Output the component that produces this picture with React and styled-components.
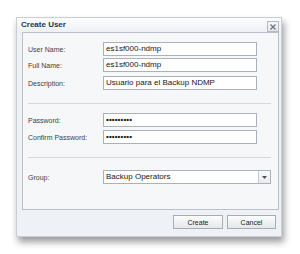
import React from 'react';
import styled, { createGlobalStyle } from 'styled-components';

const GlobalStyle = createGlobalStyle`
  html, body {
    margin: 0;
    padding: 0;
    background: #ffffff;
    font-family: "Liberation Sans", Arial, sans-serif;
  }
`;

const Page = styled.div`
  width: 300px;
  height: 254px;
  padding: 17px 0 0 16px;
  box-sizing: border-box;
`;

const Dialog = styled.div`
  width: 266px;
  height: 220px;
  box-sizing: border-box;
  border: 1px solid #c9ced5;
  background: #eef1f5;
  box-shadow: 2px 5px 7px rgba(0, 0, 0, 0.4);
  display: flex;
  flex-direction: column;
`;

const TitleBar = styled.div`
  height: 14px;
  display: flex;
  justify-content: space-between;
  align-items: flex-start;
  padding: 0 2px 0 4px;
  background: linear-gradient(#fbfcfd, #eef1f5);
`;

const Title = styled.div`
  font-size: 8px;
  font-weight: bold;
  color: #24364d;
  line-height: 14px;
`;

const CloseButton = styled.div`
  width: 12px;
  height: 11px;
  margin-top: 3px;
  box-sizing: border-box;
  border: 1px solid #b3b9c2;
  background: linear-gradient(#f7f8fa, #e3e6ea);
  display: flex;
  align-items: center;
  justify-content: center;
`;

const Panel = styled.div`
  height: 178px;
  margin: 0 2px 0 5px;
  box-sizing: border-box;
  border: 1px solid #b9c0ca;
  background: #f6f7f9;
  padding: 9px 7px 0 5px;
`;

const Row = styled.div`
  display: flex;
  align-items: center;
  height: 14px;
  margin-top: ${(p) => p.$gap || 0}px;
`;

const Label = styled.div`
  width: 75px;
  font-size: 7px;
  color: #3a3f46;
`;

const Field = styled.div`
  width: ${(p) => p.$width || 154}px;
  height: 14px;
  box-sizing: border-box;
  border: 1px solid #a9b1bc;
  background: #ffffff;
  padding-left: 2px;
  font-size: 8px;
  font-weight: ${(p) => (p.$secret ? 'bold' : 'normal')};
  letter-spacing: ${(p) => (p.$secret ? '0.1px' : '0')};
  color: #151515;
  line-height: 12px;
  white-space: nowrap;
  overflow: hidden;
`;

const Select = styled.div`
  width: 168px;
  height: 14px;
  box-sizing: border-box;
  border: 1px solid #a9b1bc;
  background: #ffffff;
  display: flex;
`;

const SelectText = styled.div`
  flex: 1;
  padding-left: 2px;
  font-size: 8px;
  line-height: 12px;
  color: #151515;
`;

const SelectArrow = styled.div`
  width: 11px;
  border-left: 1px solid #c3c9d1;
  background: linear-gradient(#fafbfc, #e9ecef);
  display: flex;
  align-items: center;
  justify-content: center;
`;

const Divider = styled.div`
  height: 1px;
  background: #d3d8de;
  margin: ${(p) => p.$top}px 0 ${(p) => p.$bottom}px;
`;

const Footer = styled.div`
  display: flex;
  justify-content: flex-end;
  gap: 4px;
  padding: 5px 5px 0 0;
`;

const Button = styled.div`
  width: ${(p) => p.$width}px;
  height: 14px;
  box-sizing: border-box;
  border: 1px solid #a7adb5;
  background: linear-gradient(#fdfdfd, #e4e7ea);
  font-size: 7px;
  color: #222;
  display: flex;
  align-items: center;
  justify-content: center;
`;

export default function App() {
  return (
    <>
      <GlobalStyle />
      <Page>
        <Dialog>
          <TitleBar>
            <Title>Create User</Title>
            <CloseButton>
              <svg width="6" height="6" viewBox="0 0 6 6">
                <path d="M0.5 0.5 L5.5 5.5 M5.5 0.5 L0.5 5.5" stroke="#6b727c" strokeWidth="1.2" />
              </svg>
            </CloseButton>
          </TitleBar>
          <Panel>
            <Row>
              <Label>User Name:</Label>
              <Field>es1sf000-ndmp</Field>
            </Row>
            <Row $gap={2}>
              <Label>Full Name:</Label>
              <Field>es1sf000-ndmp</Field>
            </Row>
            <Row $gap={4}>
              <Label>Description:</Label>
              <Field>Usuario para el Backup NDMP</Field>
            </Row>
            <Divider $top={13} $bottom={9} />
            <Row>
              <Label>Password:</Label>
              <Field $secret>•••••••••</Field>
            </Row>
            <Row $gap={3}>
              <Label>Confirm Password:</Label>
              <Field $secret>•••••••••</Field>
            </Row>
            <Divider $top={13} $bottom={12} />
            <Row>
              <Label>Group:</Label>
              <Select>
                <SelectText>Backup Operators</SelectText>
                <SelectArrow>
                  <svg width="5" height="3" viewBox="0 0 5 3">
                    <path d="M0 0 H5 L2.5 3 Z" fill="#4a4f57" />
                  </svg>
                </SelectArrow>
              </Select>
            </Row>
          </Panel>
          <Footer>
            <Button $width={50}>Create</Button>
            <Button $width={49}>Cancel</Button>
          </Footer>
        </Dialog>
      </Page>
    </>
  );
}
